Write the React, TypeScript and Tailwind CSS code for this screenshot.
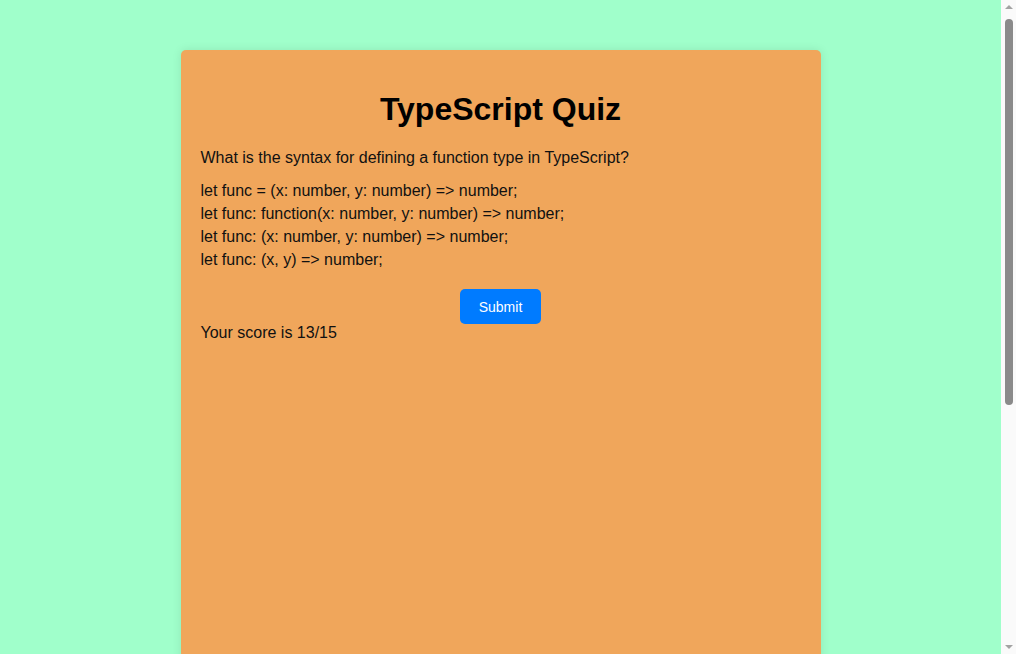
const OPTIONS = [
  'let func = (x: number, y: number) => number;',
  'let func: function(x: number, y: number) => number;',
  'let func: (x: number, y: number) => number;',
  'let func: (x, y) => number;',
]

export default function App() {
  return (
    <div className="min-h-screen bg-[#a0ffcb] font-['Liberation_Sans',Arial,sans-serif]">
      <div className="w-[calc(100%-15px)] pt-[50px] pb-[50px]">
        <div className="mx-auto w-[640px] min-h-[953px] rounded-[5px] bg-[#f0a65b] p-5 shadow-[0_0_10px_rgba(0,0,0,0.1)]">
          <h1 className="mt-[21px] mb-[21px] text-center text-[32px] font-bold leading-[37px] text-black">
            TypeScript Quiz
          </h1>
          <p className="mb-[12px] text-base leading-[18px] text-[#111]">
            What is the syntax for defining a function type in TypeScript?
          </p>
          <div className="flex flex-col">
            {OPTIONS.map((opt) => (
              <label key={opt} className="text-base leading-[23px] text-[#111]">
                {opt}
              </label>
            ))}
          </div>
          <button className="mx-auto mt-[18px] block h-[35px] w-[81px] rounded-[5px] bg-[#007bff] text-sm text-white">
            Submit
          </button>
          <p className="text-base leading-[18px] text-[#111]">Your score is 13/15</p>
        </div>
      </div>

      {/* browser scrollbar */}
      <div className="fixed top-0 right-0 flex h-screen w-[15px] flex-col items-center bg-[#fafafa]">
        <div className="mt-[5px] h-0 w-0 border-x-[4px] border-b-[4px] border-x-transparent border-b-[#a3a3a3]" />
        <div className="mt-[10px] h-[386px] w-[8px] rounded-full bg-[#8a8a8a]" />
        <div className="mt-auto mb-[5px] h-0 w-0 border-x-[4px] border-t-[4px] border-x-transparent border-t-[#a3a3a3]" />
      </div>
    </div>
  )
}
